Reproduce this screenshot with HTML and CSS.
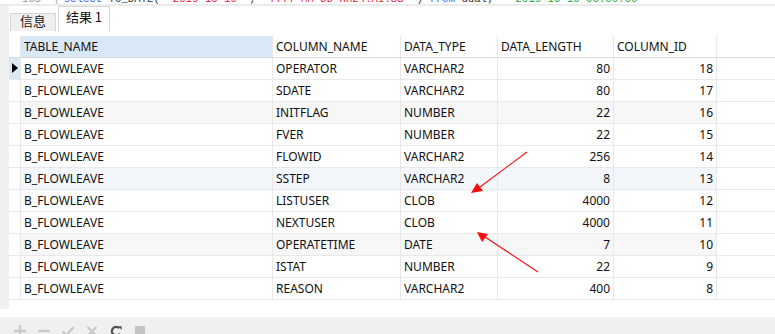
FILE: index.html
```html
<!DOCTYPE html>
<html>
<head>
<meta charset="utf-8">
<link rel="stylesheet" href="styles.css">
</head>
<body>
<div class="page">
  <div class="code">
    <div class="code-line"><span class="ln">165</span><span class="bar">|</span><span class="kw">select</span> <span class="fn">TO_DATE(</span> <span class="str">'2019-10-10 '</span>, <span class="str">'YYYY-MM-DD HH24:MI:SS'</span> ) <span class="kw">from</span> <span class="fn">dual;</span><span class="res">2019-10-10 00:00:00</span></div>
  </div>
  <div class="sep"></div>
  <div class="main">
    <div class="gutter"></div>
    <div class="content">
      <div class="tabs">
        <div class="tab tab-off">信息</div>
        <div class="tab tab-on">结果 1</div>
      </div>
      <div class="grid">
        <div class="row head">
          <div class="ind"></div>
          <div class="c c1 sel">TABLE_NAME</div>
          <div class="c c2">COLUMN_NAME</div>
          <div class="c c3">DATA_TYPE</div>
          <div class="c c4">DATA_LENGTH</div>
          <div class="c c5">COLUMN_ID</div>
        </div>
        <div class="row"><div class="ind cur"><span class="tri"></span></div><div class="c c1">B_FLOWLEAVE</div><div class="c c2">OPERATOR</div><div class="c c3">VARCHAR2</div><div class="c c4 num">80</div><div class="c c5 num">18</div></div>
        <div class="row"><div class="ind"></div><div class="c c1">B_FLOWLEAVE</div><div class="c c2">SDATE</div><div class="c c3">VARCHAR2</div><div class="c c4 num">80</div><div class="c c5 num">17</div></div>
        <div class="row shade"><div class="ind"></div><div class="c c1">B_FLOWLEAVE</div><div class="c c2">INITFLAG</div><div class="c c3">NUMBER</div><div class="c c4 num">22</div><div class="c c5 num">16</div></div>
        <div class="row"><div class="ind"></div><div class="c c1">B_FLOWLEAVE</div><div class="c c2">FVER</div><div class="c c3">NUMBER</div><div class="c c4 num">22</div><div class="c c5 num">15</div></div>
        <div class="row"><div class="ind"></div><div class="c c1">B_FLOWLEAVE</div><div class="c c2">FLOWID</div><div class="c c3">VARCHAR2</div><div class="c c4 num">256</div><div class="c c5 num">14</div></div>
        <div class="row hover"><div class="ind"></div><div class="c c1">B_FLOWLEAVE</div><div class="c c2">SSTEP</div><div class="c c3">VARCHAR2</div><div class="c c4 num">8</div><div class="c c5 num">13</div></div>
        <div class="row"><div class="ind"></div><div class="c c1">B_FLOWLEAVE</div><div class="c c2">LISTUSER</div><div class="c c3">CLOB</div><div class="c c4 num">4000</div><div class="c c5 num">12</div></div>
        <div class="row"><div class="ind"></div><div class="c c1">B_FLOWLEAVE</div><div class="c c2">NEXTUSER</div><div class="c c3">CLOB</div><div class="c c4 num">4000</div><div class="c c5 num">11</div></div>
        <div class="row shade"><div class="ind"></div><div class="c c1">B_FLOWLEAVE</div><div class="c c2">OPERATETIME</div><div class="c c3">DATE</div><div class="c c4 num">7</div><div class="c c5 num">10</div></div>
        <div class="row"><div class="ind"></div><div class="c c1">B_FLOWLEAVE</div><div class="c c2">ISTAT</div><div class="c c3">NUMBER</div><div class="c c4 num">22</div><div class="c c5 num">9</div></div>
        <div class="row"><div class="ind"></div><div class="c c1">B_FLOWLEAVE</div><div class="c c2">REASON</div><div class="c c3">VARCHAR2</div><div class="c c4 num">400</div><div class="c c5 num">8</div></div>
      </div>
    </div>
  </div>
  <div class="spacer"></div>
  <div class="toolbar">
    <svg class="ico" width="12" height="12" viewBox="0 0 12 12"><path d="M6 0v12M0 6h12" stroke="#c9c9c9" stroke-width="2.4"/></svg>
    <svg class="ico" width="12" height="12" viewBox="0 0 12 12"><path d="M0 6h12" stroke="#c9c9c9" stroke-width="2.4"/></svg>
    <svg class="ico" width="12" height="12" viewBox="0 0 12 12"><path d="M0.5 6.5l3.8 3.8L11.5 2" fill="none" stroke="#c9c9c9" stroke-width="2.4"/></svg>
    <svg class="ico" width="12" height="12" viewBox="0 0 12 12"><path d="M1.5 2l9 9M10.5 2l-9 9" stroke="#c9c9c9" stroke-width="2.4"/></svg>
    <svg class="ico" width="12" height="12" viewBox="0 0 12 12"><path d="M9.2 3.2A4.3 4.3 0 1 0 9.8 8.6" fill="none" stroke="#505050" stroke-width="2.2"/><path d="M8 1.2h3.6v3.6z" fill="#505050"/></svg>
    <svg class="ico" width="12" height="12" viewBox="0 0 12 12"><rect x="1" y="1" width="10" height="11" fill="#c4c4c4"/></svg>
  </div>
  <svg class="arrows" width="775" height="334" viewBox="0 0 775 334">
    <line x1="527" y1="152" x2="476" y2="190" stroke="#f01010" stroke-width="1.1"/>
    <polygon points="471,193 477,183 483,191" fill="#f01010"/>
    <line x1="538" y1="272" x2="482" y2="235" stroke="#f01010" stroke-width="1.1"/>
    <polygon points="477,232 488,234 482,242" fill="#f01010"/>
  </svg>
</div>
</body>
</html>
```

FILE: styles.css
```css
html, body {
  margin: 0;
  padding: 0;
  background: #fff;
}
.page {
  position: relative;
  width: 775px;
  height: 334px;
  overflow: hidden;
  display: flex;
  flex-direction: column;
  font-family: "Noto Sans", "Noto Sans CJK SC", sans-serif;
  color: #111;
}
.code {
  height: 4px;
  overflow: hidden;
  flex: none;
}
.code-line {
  margin-top: -7px;
  line-height: 12px;
  font-family: "Liberation Mono", monospace;
  font-size: 10.7px;
  white-space: pre;
  color: #333;
  padding-left: 22px;
}
.ln { color: #9a9a9a; }
.bar { color: #aaa; margin-left: 12px; margin-right: 4px; }
.kw { color: #2f63f0; }
.fn { color: #333; }
.str { color: #ee1c4a; }
.res { color: #22a83a; margin-left: 22px; }
.sep {
  height: 2px;
  background: #ebebeb;
  flex: none;
}
.main {
  display: flex;
  height: 303px;
  flex: none;
}
.gutter {
  width: 9px;
  background: #f0f0f0;
  flex: none;
}
.content {
  flex: 1;
  display: flex;
  flex-direction: column;
}
.tabs {
  height: 25px;
  display: flex;
  align-items: flex-end;
  padding-left: 1px;
  gap: 2px;
  font-family: "Noto Sans CJK SC", sans-serif;
  font-size: 13px;
}
.tab {
  box-sizing: border-box;
  border: 1px solid #d6d6d6;
  border-bottom: none;
  text-align: center;
}
.tab-off {
  width: 46px;
  height: 18px;
  background: #efefef;
  line-height: 14px;
  color: #222;
}
.tab-on {
  width: 52px;
  height: 25px;
  background: #fff;
  line-height: 20px;
  color: #111;
}
.grid {
  margin-top: 5px;
  display: flex;
  flex-direction: column;
  font-size: 12px;
}
.row {
  display: flex;
  height: 22px;
  box-sizing: border-box;
  border-bottom: 1px solid #e8e8e8;
}
.row.head {
  border-bottom: 1px solid #dadada;
}
.ind {
  width: 11px;
  flex: none;
  position: relative;
}
.ind.cur {
  background: #dbe8f6;
}
.tri {
  position: absolute;
  left: 3px;
  top: 5px;
  width: 0;
  height: 0;
  border-left: 6px solid #000;
  border-top: 5px solid transparent;
  border-bottom: 5px solid transparent;
}
.c {
  box-sizing: border-box;
  border-left: 1px solid #e8e8e8;
  padding: 0 3px 0 3px;
  line-height: 21px;
  white-space: nowrap;
  overflow: hidden;
  flex: none;
}
.c1 { width: 252px; }
.c2 { width: 128px; }
.c3 { width: 97px; }
.c4 { width: 116px; }
.c5 { width: 104px; border-right: 1px solid #e8e8e8; }
.num { text-align: right; }
.sel { background: #d9e8f7; }
.shade .c { background: #f7f7f7; }
.hover .c { background: #f3f7fc; }
.spacer {
  height: 8px;
  flex: none;
}
.toolbar {
  flex: 1;
  background: #f0f0f0;
  display: flex;
  align-items: flex-start;
  padding: 8px 0 0 14px;
  gap: 12px;
}
.ico {
  flex: none;
}
.arrows {
  position: absolute;
  left: 0;
  top: 0;
  pointer-events: none;
}
```
